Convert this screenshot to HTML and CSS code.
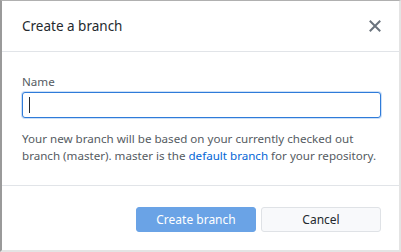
FILE: index.html
```html
<!DOCTYPE html>
<html lang="en">
<head>
  <meta charset="UTF-8" />
  <title>Create a branch</title>
  <link rel="stylesheet" href="styles.css">
</head>
<body>

  <div class="dialog">
    <div class="dialog-header">
      <h1>Create a branch</h1>
      <button class="close-btn" aria-label="Close">
        <svg width="12" height="12" viewBox="0 0 12 12">
          <path d="M1.5 1.5 L10.5 10.5 M10.5 1.5 L1.5 10.5" stroke="#6a737d" stroke-width="2" stroke-linecap="square" />
        </svg>
      </button>
    </div>

    <div class="dialog-body">
      <label for="branchName">Name</label>
      <div class="input-wrap">
        <input type="text" id="branchName" autofocus />
        <span class="caret"></span>
      </div>
      <p class="hint">
        Your new branch will be based on your currently checked out<br>
        branch (master). master is the <a href="#">default branch</a> for your repository.
      </p>
    </div>

    <div class="dialog-footer">
      <button class="btn primary-btn" disabled>Create branch</button>
      <button class="btn cancel-btn">Cancel</button>
    </div>
  </div>

  <script>
    document.getElementById("branchName").focus();
  </script>

</body>
</html>
```

FILE: styles.css
```css
* {
  box-sizing: border-box;
}

body {
  margin: 0;
  font-family: 'Noto Sans', 'Open Sans', sans-serif;
  font-size: 11.6px;
  color: #24292e;
  background: white;
}

.dialog {
  width: 401px;
  height: 252px;
  background: white;
  border-left: 2px solid #9a9a9a;
  border-top: 1px solid #b0b0b0;
  border-right: 2px solid #e4e4e4;
  border-bottom: 2px solid #e4e4e4;
  display: flex;
  flex-direction: column;
}

.dialog-header {
  height: 51px;
  display: flex;
  align-items: center;
  justify-content: space-between;
  padding: 0 14px 0 20px;
  border-bottom: 1px solid #e1e4e8;
}

h1 {
  margin: 0;
  font-size: 13.5px;
  font-weight: normal;
  color: #24292e;
}

.close-btn {
  background: none;
  border: none;
  padding: 4px;
  display: flex;
}

.dialog-body {
  padding: 22px 18px 0 20px;
  height: 134px;
  border-bottom: 1px solid #e1e4e8;
}

label {
  display: block;
  color: #555b62;
  margin-bottom: 3px;
}

.input-wrap {
  position: relative;
}

input[type="text"] {
  width: 100%;
  height: 26px;
  padding: 0 6px;
  border: 1px solid #2f7bd9;
  border-radius: 3px;
  box-shadow: 0 0 0 1px rgba(3, 102, 214, 0.2);
  outline: none;
  font-family: inherit;
  font-size: 12px;
  caret-color: transparent;
}

.caret {
  position: absolute;
  left: 7px;
  top: 5px;
  width: 1px;
  height: 16px;
  background: #24292e;
}

.hint {
  margin: 12px 0 0;
  line-height: 17px;
  color: #555b62;
  white-space: nowrap;
}

.hint a {
  color: #0366d6;
  text-decoration: none;
}

.dialog-footer {
  display: flex;
  justify-content: flex-end;
  gap: 5px;
  padding: 21px 18px 0 0;
}

.btn {
  width: 120px;
  height: 25px;
  border-radius: 3px;
  font-family: inherit;
  font-size: 12px;
  cursor: pointer;
}

.primary-btn {
  background: #6aa3e6;
  border: 1px solid #6aa3e6;
  color: white;
}

.cancel-btn {
  background: #f8f9fb;
  border: 1px solid #dfe2e6;
  color: #24292e;
}
```
